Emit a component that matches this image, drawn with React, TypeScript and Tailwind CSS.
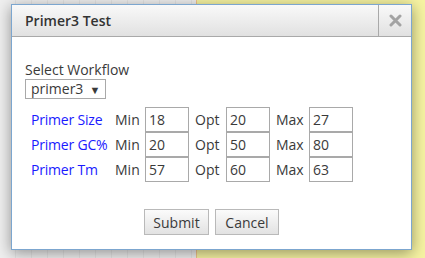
import React from "react"

const rows = [
  { label: "Primer Size", min: "18", opt: "20", max: "27" },
  { label: "Primer GC%", min: "20", opt: "50", max: "80" },
  { label: "Primer Tm", min: "57", opt: "60", max: "63" },
]

function NumBox({ value }: { value: string }) {
  return (
    <input
      defaultValue={value}
      className="w-[44px] h-[25px] border border-[#a9a9a9] bg-white px-[3px] text-[14px] text-[#3a3a3a] outline-none"
    />
  )
}

export default function App() {
  return (
    <div
      className="relative w-[425px] h-[258px] overflow-hidden"
      style={{ fontFamily: '"Open Sans", "Noto Sans", sans-serif' }}
    >
      {/* page behind the dialog */}
      <div className="flex h-full">
        <div className="w-[196px] h-full bg-[#efefef] bg-[repeating-linear-gradient(90deg,transparent_0_15px,#e4e4e4_15px_16px)]" />
        <div className="flex-1 h-full bg-[#f6f3a2] border-l border-[#f2c48a]" />
      </div>

      {/* dialog */}
      <div className="absolute left-[11px] top-[4px] w-[401px] h-[246px] border border-[#7ca6cf] bg-white shadow-[0_3px_14px_rgba(0,0,0,0.4)] flex flex-col">
        <div className="flex h-[32px] border-b border-[#a9a9a9] bg-gradient-to-b from-[#f9f9f9] to-[#e1e1e1]">
          <div className="flex-1 pl-[13px] flex items-center text-[14px] font-semibold text-[#333]">
            Primer3 Test
          </div>
          <div className="w-[33px] border-l border-[#a9a9a9] flex items-center justify-center">
            <svg width="13" height="13" viewBox="0 0 13 13">
              <path d="M2 2 L11 11 M11 2 L2 11" stroke="#a3a3a3" strokeWidth="3" strokeLinecap="round" />
            </svg>
          </div>
        </div>

        <div className="flex-1 flex flex-col px-[13px] pt-[23px] text-[14px] text-[#3a3a3a]">
          <div className="leading-[19px]">Select Workflow</div>
          <div className="w-[81px] h-[20px] border border-[#a9a9a9] flex items-center pl-[5px] leading-none">
            primer3
            <span className="ml-[6px] text-[11px]">▼</span>
          </div>

          <div className="mt-[8px] flex flex-col">
            {rows.map((r) => (
              <div key={r.label} className="flex items-center h-[25px]">
                <div className="w-[90px] pl-[6px] text-[#1a1aff] whitespace-nowrap tracking-[-0.2px]">{r.label}</div>
                <div className="w-[30px]">Min</div>
                <NumBox value={r.min} />
                <div className="w-[37px] pl-[6px]">Opt</div>
                <NumBox value={r.opt} />
                <div className="w-[39px] pl-[6px]">Max</div>
                <NumBox value={r.max} />
              </div>
            ))}
          </div>

          <div className="mt-[27px] flex justify-center gap-[6px]">
            <button className="w-[65px] h-[26px] border border-[#b9b9b9] bg-gradient-to-b from-[#fbfbfb] to-[#e2e2e2] text-[14px] text-[#3a3a3a]">
              Submit
            </button>
            <button className="w-[64px] h-[26px] border border-[#b9b9b9] bg-gradient-to-b from-[#fbfbfb] to-[#e2e2e2] text-[14px] text-[#3a3a3a]">
              Cancel
            </button>
          </div>
        </div>
      </div>
    </div>
  )
}
